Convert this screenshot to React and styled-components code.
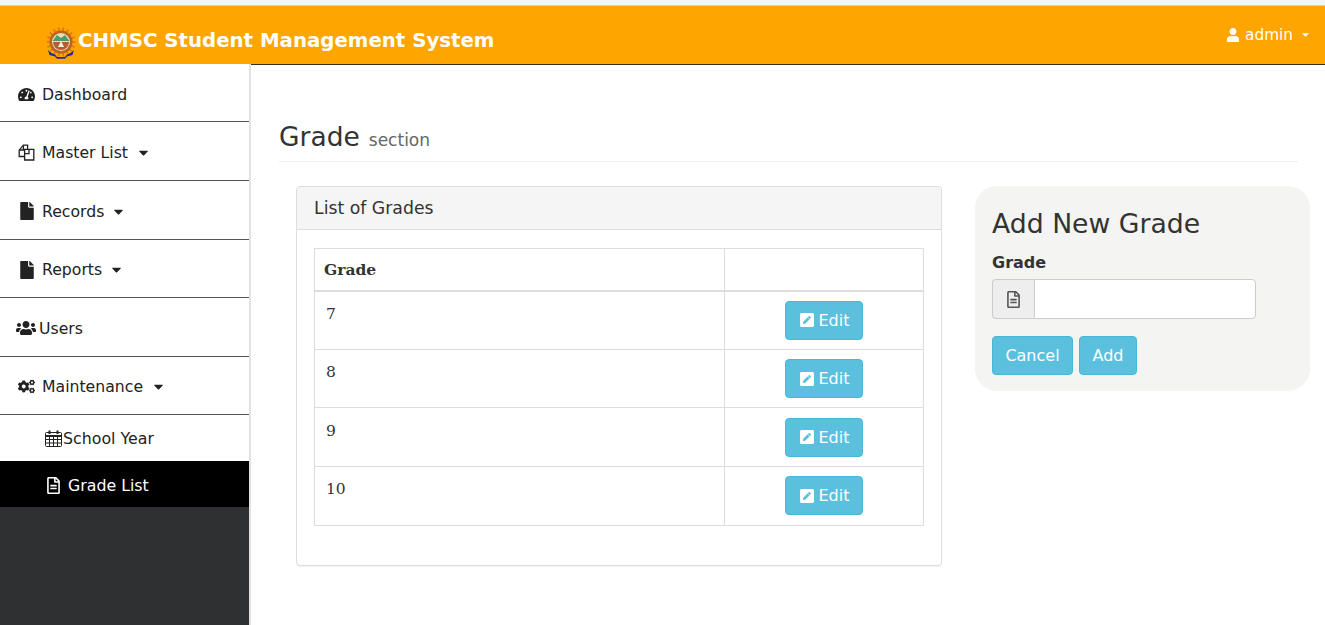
import React from 'react';
import styled, { createGlobalStyle } from 'styled-components';
import {
  FaTachometerAlt,
  FaFile,
  FaUsers,
  FaCogs,
  FaUser,
  FaCaretDown,
  FaRegFileAlt,
  FaPenSquare,
} from 'react-icons/fa';

const GlobalStyle = createGlobalStyle`
  html, body {
    margin: 0;
    padding: 0;
    height: 100%;
    background: #fff;
    overflow: hidden;
  }
  * { box-sizing: border-box; }
  body {
    font-family: "DejaVu Sans", Verdana, sans-serif;
    color: #333;
  }
`;

const Page = styled.div`
  width: 1325px;
  height: 625px;
  display: flex;
  flex-direction: column;
  padding-top: 5px;
  background: #fff;
  overflow: hidden;
  box-shadow: inset 0 5px 0 #f3f5fb;
`;

const Navbar = styled.header`
  height: 60px;
  flex: none;
  display: flex;
  justify-content: space-between;
  background: #ffa500;
  border-top: 1px solid #d9d3c4;
  border-bottom: 1px solid #3a2f18;
`;

const Brand = styled.div`
  display: flex;
  align-items: center;
  gap: 1px;
  padding: 10px 0 0 45px;
  color: #fff;
  font-size: 19.75px;
  font-weight: bold;
`;

const UserMenu = styled.div`
  display: flex;
  align-items: center;
  gap: 5px;
  padding: 0 14px 0 0;
  color: #fff;
  font-size: 15.3px;
  margin-top: -1px;
`;

const Body = styled.div`
  flex: 1;
  display: flex;
  min-height: 0;
`;

const Sidebar = styled.nav`
  width: 251px;
  flex: none;
  display: flex;
  flex-direction: column;
  background: #2f3032;
  border-right: 2px solid #e2e2e2;
  margin-top: -1px;
`;

const NavItem = styled.div`
  height: ${(p) => p.$height}px;
  display: flex;
  align-items: center;
  gap: ${(p) => p.$gap ?? 7}px;
  padding: 2px 0 0 ${(p) => p.$indent ?? 18}px;
  background: #fff;
  border-bottom: 1px solid #555;
  color: #222;
  font-size: 15.7px;
  white-space: nowrap;
  svg { flex: none; }

  &:first-child { padding-top: 4px; }
`;

const SubItem = styled.div`
  height: 46px;
  display: flex;
  align-items: center;
  gap: ${(p) => p.$gap}px;
  padding: ${(p) => (p.$active ? 2 : 0)}px 0 0 45px;
  background: ${(p) => (p.$active ? '#000' : '#fff')};
  color: ${(p) => (p.$active ? '#fff' : '#222')};
  font-size: 15.8px;
  svg { flex: none; }
`;

const Caret = styled(FaCaretDown)`
  margin-left: 1px;
  font-size: 15px;
`;

const Main = styled.main`
  flex: 1;
  padding: 54px 27px 0 28px;
  min-width: 0;
`;

const PageHeader = styled.div`
  display: flex;
  align-items: baseline;
  gap: 9px;
  height: 43px;
  border-bottom: 1px solid #eee;
  margin-bottom: 24px;
`;

const PageTitle = styled.h1`
  margin: 0;
  font-size: 26.5px;
  font-weight: normal;
  line-height: 36px;
  color: #333;
`;

const PageSub = styled.small`
  font-size: 17px;
  color: #666;
`;

const Columns = styled.div`
  display: flex;
  align-items: flex-start;
  margin-right: -12px;
  padding-left: 17px;
`;

const Panel = styled.section`
  width: 646px;
  height: 380px;
  flex: none;
  border: 1px solid #ddd;
  border-radius: 4px;
  background: #fff;
  box-shadow: 0 1px 1px rgba(0, 0, 0, 0.05);
`;

const PanelHead = styled.div`
  height: 43px;
  display: flex;
  align-items: center;
  padding-left: 17px;
  background: #f5f5f5;
  border-bottom: 1px solid #ddd;
  border-radius: 3px 3px 0 0;
  font-size: 17.3px;
  color: #333;
`;

const PanelBody = styled.div`
  padding: 18px 17px 0;
`;

const Table = styled.table`
  width: 610px;
  border-collapse: collapse;
  table-layout: fixed;
  font-size: 15.5px;

  th, td {
    border: 1px solid #ddd;
  }
`;

const HeadCell = styled.th`
  height: 42px;
  padding: 0 9px;
  text-align: left;
  font-family: "DejaVu Serif", "Liberation Serif", serif;
  font-size: 15.5px;
  color: #333;
  border-bottom-width: 2px !important;
`;

const GradeCell = styled.td`
  height: 58.7px;
  padding: 0 11px 13px;
  font-family: "DejaVu Serif", "Liberation Serif", serif;
  color: #333;
`;

const ActionCell = styled.td`
  text-align: center;
  padding: 0;
`;

const Button = styled.button`
  display: inline-flex;
  align-items: center;
  justify-content: center;
  gap: ${(p) => (p.$icon ? 4 : 0)}px;
  height: 39px;
  width: ${(p) => p.$width}px;
  padding: 0;
  border: 1px solid #46b8da;
  border-radius: 4px;
  background: #5bc0de;
  color: #fff;
  font-family: inherit;
  font-size: 16px;
`;

const AddCard = styled.aside`
  width: 335px;
  height: 205px;
  flex: none;
  margin-left: 33px;
  padding: 21px 17px;
  border-radius: 22px;
  background: #f4f4f2;
`;

const CardTitle = styled.h2`
  margin: 0 0 12px;
  font-size: 26.7px;
  font-weight: normal;
  line-height: 34px;
  color: #333;
`;

const FieldLabel = styled.label`
  display: block;
  margin-bottom: 6px;
  font-size: 16px;
  font-weight: bold;
  line-height: 20px;
  color: #333;
`;

const InputGroup = styled.div`
  display: flex;
  width: 264px;
  height: 40px;
  margin-bottom: 17px;
`;

const InputAddon = styled.span`
  width: 42px;
  display: flex;
  align-items: center;
  justify-content: center;
  background: #eee;
  border: 1px solid #ccc;
  border-right: 0;
  border-radius: 4px 0 0 4px;
  color: #555;
  font-size: 17px;
`;

const TextInput = styled.input`
  flex: 1;
  min-width: 0;
  border: 1px solid #ccc;
  border-radius: 0 4px 4px 0;
  background: #fff;
`;

const ButtonRow = styled.div`
  display: flex;
  gap: 6px;
`;

// two-page icon, fa-files-o has no match in the fa5 set
const FilesIcon = () => (
  <svg width="17" height="17" viewBox="0 0 17 17" fill="none" stroke="#222" strokeWidth="1.3">
    <path d="M6 12.5H1.2V6.2L5.4 1.2H9.6V5" />
    <path d="M5.4 1.6V6H1.4" />
    <path d="M6.6 5.4H15.8V16H6.6Z" />
    <path d="M11 5.6V9.6H6.8" />
  </svg>
);

// fa4 calendar, ruled grid with two rings
const CalendarIcon = () => (
  <svg width="17" height="17" viewBox="0 0 17 17" fill="none" stroke="#222" strokeWidth="1">
    <rect x="0.5" y="2.5" width="16" height="14" rx="1" />
    <path d="M0.5 6h16" strokeWidth="2" />
    <path d="M0.5 9.5h16M0.5 13h16M4.5 6v10.5M8.5 6v10.5M12.5 6v10.5" />
    <path d="M4.5 0.5v3.5M12.5 0.5v3.5" strokeWidth="2" />
  </svg>
);

// crest next to the brand name
const Logo = () => (
  <svg width="32" height="32" viewBox="0 0 32 32" style={{ marginTop: 5, flex: 'none' }}>
    <g stroke="#e0761c" strokeWidth="1.6">
      {Array.from({ length: 18 }).map((_, i) => (
        <line key={i} x1="16" y1="0.5" x2="16" y2="5" transform={`rotate(${i * 20 - 170} 16 15)`} />
      ))}
    </g>
    <circle cx="16" cy="15" r="11.5" fill="#b9651f" />
    <circle cx="16" cy="15" r="9" fill="#dfe2b8" />
    <path d="M7.5 14 L12 8 L16 11 L20 8 L24.5 14Z" fill="#4f9a6a" />
    <path d="M8 15h16a8 8 0 0 1-16 0Z" fill="#b85a33" />
    <path d="M13 20l3-6 3 6Z" fill="#f4efe0" />
    <path d="M3 23c3 3 5 4 7 4.5l2 2.5h8l2-2.5c2-.5 4-1.5 7-4.5l-1.5 5-5.5 1.5-2 2.2H12L10 29.5 4.5 28Z" fill="#1b2f8a" />
  </svg>
);

const grades = ['7', '8', '9', '10'];

const App = () => (
  <Page>
    <GlobalStyle />
    <Navbar>
      <Brand>
        <Logo />
        CHMSC Student Management System
      </Brand>
      <UserMenu>
        <FaUser size={14} />
        admin
        <FaCaretDown size={11} style={{ marginLeft: 2 }} />
      </UserMenu>
    </Navbar>
    <Body>
      <Sidebar>
        <NavItem $height={58}>
          <FaTachometerAlt size={17} />
          Dashboard
        </NavItem>
        <NavItem $height={59}>
          <FilesIcon />
          Master List <Caret />
        </NavItem>
        <NavItem $height={59} $indent={18} $gap={6}>
          <FaFile size={18} />
          Records <Caret />
        </NavItem>
        <NavItem $height={58} $indent={18} $gap={6}>
          <FaFile size={18} />
          Reports <Caret />
        </NavItem>
        <NavItem $height={59} $indent={16} $gap={3}>
          <FaUsers size={20} />
          Users
        </NavItem>
        <NavItem $height={58}>
          <FaCogs size={17} />
          Maintenance <Caret />
        </NavItem>
        <SubItem $gap={1}>
          <CalendarIcon />
          School Year
        </SubItem>
        <SubItem $gap={6} $active>
          <FaRegFileAlt size={17} />
          Grade List
        </SubItem>
      </Sidebar>
      <Main>
        <PageHeader>
          <PageTitle>Grade</PageTitle>
          <PageSub>section</PageSub>
        </PageHeader>
        <Columns>
          <Panel>
            <PanelHead>List of Grades</PanelHead>
            <PanelBody>
              <Table>
                <colgroup>
                  <col style={{ width: 410 }} />
                  <col />
                </colgroup>
                <thead>
                  <tr>
                    <HeadCell>Grade</HeadCell>
                    <HeadCell />
                  </tr>
                </thead>
                <tbody>
                  {grades.map((grade) => (
                    <tr key={grade}>
                      <GradeCell>{grade}</GradeCell>
                      <ActionCell>
                        <Button $width={78} $icon>
                          <FaPenSquare size={16} />
                          Edit
                        </Button>
                      </ActionCell>
                    </tr>
                  ))}
                </tbody>
              </Table>
            </PanelBody>
          </Panel>
          <AddCard>
            <CardTitle>Add New Grade</CardTitle>
            <FieldLabel>Grade</FieldLabel>
            <InputGroup>
              <InputAddon>
                <FaRegFileAlt />
              </InputAddon>
              <TextInput />
            </InputGroup>
            <ButtonRow>
              <Button $width={81}>Cancel</Button>
              <Button $width={58}>Add</Button>
            </ButtonRow>
          </AddCard>
        </Columns>
      </Main>
    </Body>
  </Page>
);

export default App;
